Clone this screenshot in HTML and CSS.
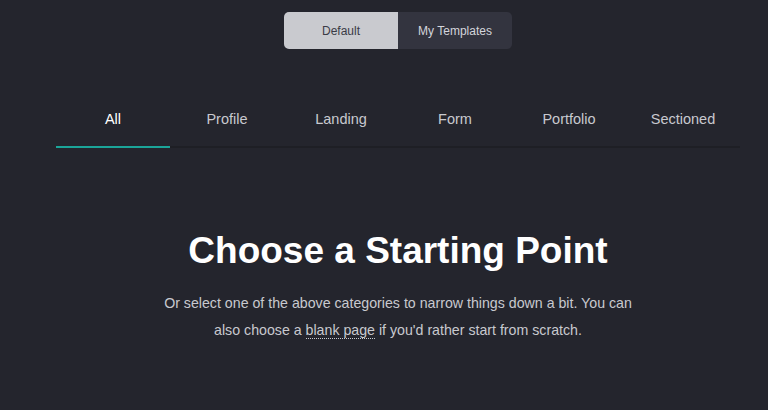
FILE: index.html
```html
<!DOCTYPE html>
<html>
<head>
<meta charset="utf-8">
<link rel="stylesheet" href="styles.css">
</head>
<body>
<div class="page">
  <div class="toggle-row">
    <div class="toggle">
      <button class="seg seg-active">Default</button>
      <button class="seg">My Templates</button>
    </div>
  </div>
  <nav class="tabs">
    <div class="tab tab-active">All</div>
    <div class="tab">Profile</div>
    <div class="tab">Landing</div>
    <div class="tab">Form</div>
    <div class="tab">Portfolio</div>
    <div class="tab">Sectioned</div>
  </nav>
  <section class="intro">
    <h1 class="title">Choose a Starting Point</h1>
    <p class="lead">Or select one of the above categories to narrow things down a bit. You can<br>also choose a <span class="link">blank page</span> if you'd rather start from scratch.</p>
  </section>
</div>
</body>
</html>
```

FILE: styles.css
```css
html, body {
  margin: 0;
  padding: 0;
  background: #24252d;
  height: 100%;
}
body {
  font-family: "Liberation Sans", Arial, sans-serif;
  overflow: hidden;
}
.page {
  width: 684px;
  margin-left: 56px;
}
.toggle-row {
  display: flex;
  justify-content: center;
  padding-top: 12px;
}
.toggle {
  display: flex;
  background: #33343f;
  border-radius: 5px;
  overflow: hidden;
}
.seg {
  width: 114px;
  height: 37px;
  border: 0;
  background: transparent;
  color: #d4d5dc;
  font-family: "Liberation Sans", Arial, sans-serif;
  font-size: 12px;
  padding: 0;
}
.seg-active {
  background: #c9cacf;
  color: #3a3b46;
}
.tabs {
  display: grid;
  grid-template-columns: repeat(6, 1fr);
  margin-top: 39px;
  border-bottom: 2px solid #1e1f25;
}
.tab {
  height: 60px;
  display: flex;
  align-items: center;
  justify-content: center;
  color: #c8c9cf;
  font-size: 14.5px;
  margin-bottom: -2px;
  border-bottom: 2px solid transparent;
  padding-top: 4px;
  box-sizing: border-box;
}
.tab-active {
  color: #ffffff;
  border-bottom-color: #1ba599;
}
.intro {
  text-align: center;
  padding-top: 81px;
}
.title {
  margin: 0;
  color: #ffffff;
  font-size: 37px;
  font-weight: bold;
  line-height: 44px;
}
.lead {
  margin: 17px 0 0;
  color: #c8c9cf;
  font-size: 14.2px;
  line-height: 27px;
}
.link {
  border-bottom: 1px dotted #c8c9cf;
}
```
